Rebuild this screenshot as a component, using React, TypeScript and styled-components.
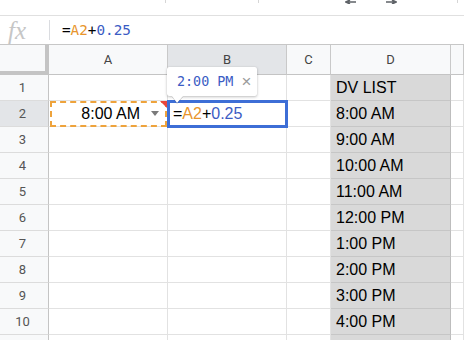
import styled, { createGlobalStyle } from "styled-components";

const GlobalStyle = createGlobalStyle`
  html, body {
    margin: 0;
    padding: 0;
    background: #ffffff;
    overflow: hidden;
  }
  body {
    font-family: "Liberation Sans", Arial, sans-serif;
  }
`;

const Page = styled.div`
  width: 464px;
  height: 340px;
  overflow: hidden;
  background: #fff;
`;

const Toolbar = styled.div`
  display: flex;
  align-items: flex-start;
  height: 15px;
  border-bottom: 1px solid #e0e0e0;
  overflow: hidden;
`;

const ToolSep = styled.div<{ $at: number }>`
  width: 1px;
  height: 3px;
  background: #d6d6d6;
  margin-left: ${(p) => p.$at}px;
`;

const ToolIcon = styled.svg<{ $at: number }>`
  width: 14px;
  height: 4px;
  margin-left: ${(p) => p.$at}px;
  flex-shrink: 0;
`;

const FormulaBar = styled.div`
  display: flex;
  align-items: center;
  height: 28px;
  border-bottom: 1px solid #c7c7c7;
`;

const FxLabel = styled.span`
  font-family: "Liberation Serif", "DejaVu Serif", serif;
  font-style: italic;
  font-size: 25px;
  color: #c6c6c6;
  width: 40px;
  padding-left: 8px;
  line-height: 1;
`;

const BarDivider = styled.div`
  width: 1px;
  height: 20px;
  background: #dadce0;
  margin-left: 1px;
`;

const FormulaText = styled.div`
  font-family: "DejaVu Sans Mono", "Liberation Mono", monospace;
  font-size: 14.3px;
  color: #000;
  margin-left: 12px;
`;

const Ref = styled.span`
  color: #e8952c;
`;

const Num = styled.span`
  color: #3b5cc4;
`;

const Sheet = styled.div`
  display: grid;
  grid-template-columns: 49px 119px 119px 44px 120px 1fr;
  grid-template-rows: 30px;
  grid-auto-rows: 26px;
`;

const Corner = styled.div`
  box-sizing: border-box;
  background: #f8f9fa;
  border-right: 4px solid #c4c4c4;
  border-bottom: 4px solid #c4c4c4;
`;

const ColHeader = styled.div<{ $active?: boolean }>`
  box-sizing: border-box;
  display: flex;
  align-items: center;
  justify-content: center;
  background: ${(p) => (p.$active ? "#e3e5e8" : "#f8f9fa")};
  border-right: 1px solid #c9c9c9;
  border-bottom: 1px solid #c4c4c4;
  font-family: Roboto, "Liberation Sans", Arial, sans-serif;
  font-size: 13px;
  color: #444;
`;

const RowHeader = styled.div<{ $active?: boolean }>`
  box-sizing: border-box;
  display: flex;
  align-items: center;
  justify-content: center;
  padding-right: 3px;
  background: ${(p) => (p.$active ? "#e3e5e8" : "#f8f9fa")};
  border-right: 1px solid #c4c4c4;
  border-bottom: 1px solid #dcdcdc;
  font-family: Roboto, "Liberation Sans", Arial, sans-serif;
  font-size: 13px;
  color: #555;
`;

const Cell = styled.div<{ $shaded?: boolean }>`
  box-sizing: border-box;
  position: relative;
  display: flex;
  align-items: center;
  padding-left: 5px;
  background: ${(p) => (p.$shaded ? "#d9d9d9" : "#ffffff")};
  border-right: 1px solid ${(p) => (p.$shaded ? "#bdbdbd" : "#e2e2e2")};
  border-bottom: 1px solid ${(p) => (p.$shaded ? "#c6c6c6" : "#e2e2e2")};
  font-size: 16px;
  color: #000;
  white-space: nowrap;
`;

const TimeCell = styled(Cell)`
  justify-content: flex-end;
  gap: 11px;
  padding-right: 8px;
`;

const CopyMarquee = styled.div`
  position: absolute;
  top: 0;
  left: 1px;
  right: 0;
  bottom: -1px;
  border: 2px dashed #eea33c;
  pointer-events: none;
`;

const ErrorFlag = styled.div`
  position: absolute;
  top: 0;
  right: 0;
  width: 0;
  height: 0;
  border-top: 7px solid #e8453c;
  border-left: 7px solid transparent;
`;

const Caret = styled.div`
  width: 0;
  height: 0;
  border-left: 4px solid transparent;
  border-right: 4px solid transparent;
  border-top: 5px solid #7a7a7a;
`;

const ActiveBorder = styled.div`
  position: absolute;
  top: -1px;
  left: -1px;
  right: -2px;
  bottom: -2px;
  border: 3px solid #3d6ed6;
  z-index: 2;
  pointer-events: none;
`;

const Tooltip = styled.div`
  position: absolute;
  left: -1px;
  top: -34px;
  width: 90px;
  height: 29px;
  box-sizing: border-box;
  display: flex;
  align-items: center;
  gap: 8px;
  padding-left: 10px;
  background: #fff;
  border-radius: 2px;
  box-shadow: 0 1px 3px rgba(0, 0, 0, 0.25), 0 0 1px rgba(0, 0, 0, 0.15);
  z-index: 3;

  &::after {
    content: "";
    position: absolute;
    left: 5px;
    bottom: -7px;
    width: 0;
    height: 0;
    border-left: 5px solid transparent;
    border-right: 6px solid transparent;
    border-top: 7px solid #fff;
    filter: drop-shadow(0 1px 0.5px rgba(0, 0, 0, 0.2));
  }
`;

const TipValue = styled.span`
  font-family: "DejaVu Sans Mono", "Liberation Mono", monospace;
  font-size: 13.4px;
  color: #3b5cc4;
`;

const TipClose = styled.span`
  font-size: 17px;
  color: #9a9a9a;
  line-height: 1;
`;

const columns = ["A", "B", "C", "D", ""];

// last row sits below the fold, only its top edge shows
const dvList = [
  "DV LIST",
  "8:00 AM",
  "9:00 AM",
  "10:00 AM",
  "11:00 AM",
  "12:00 PM",
  "1:00 PM",
  "2:00 PM",
  "3:00 PM",
  "4:00 PM",
  "",
];

const ArrowBit = ({ at, flip }: { at: number; flip?: boolean }) => (
  <ToolIcon $at={at} viewBox="0 0 14 4">
    <path
      d={flip ? "M9 0 L13 2 L9 4 M13 2 H3" : "M5 0 L1 2 L5 4 M1 2 H11"}
      stroke="#5f6368"
      strokeWidth="1.6"
      fill="none"
    />
  </ToolIcon>
);

const App = () => {
  return (
    <Page>
      <GlobalStyle />
      <Toolbar>
        <ToolSep $at={165} />
        <ToolSep $at={92} />
        <ArrowBit at={86} />
        <ArrowBit at={24} flip />
        <ToolSep $at={60} />
      </Toolbar>
      <FormulaBar>
        <FxLabel>fx</FxLabel>
        <BarDivider />
        <FormulaText>
          =<Ref>A2</Ref>+<Num>0.25</Num>
        </FormulaText>
      </FormulaBar>
      <Sheet>
        <Corner />
        {columns.map((c) => (
          <ColHeader key={c || "E"} $active={c === "B"}>
            {c}
          </ColHeader>
        ))}
        {dvList.map((item, i) => {
          const row = i + 1;
          return [
            <RowHeader key={`h${row}`} $active={row === 2}>
              {row <= 10 ? row : ""}
            </RowHeader>,
            row === 2 ? (
              <TimeCell key={`a${row}`}>
                <CopyMarquee />
                <ErrorFlag />
                <span>8:00 AM</span>
                <Caret />
              </TimeCell>
            ) : (
              <Cell key={`a${row}`} />
            ),
            row === 2 ? (
              <Cell key={`b${row}`}>
                <ActiveBorder />
                <Tooltip>
                  <TipValue>2:00 PM</TipValue>
                  <TipClose>×</TipClose>
                </Tooltip>
                =<Ref>A2</Ref>+<Num>0.25</Num>
              </Cell>
            ) : (
              <Cell key={`b${row}`} />
            ),
            <Cell key={`c${row}`} />,
            <Cell key={`d${row}`} $shaded>
              {item}
            </Cell>,
            <Cell key={`e${row}`} />,
          ];
        })}
      </Sheet>
    </Page>
  );
};

export default App;
